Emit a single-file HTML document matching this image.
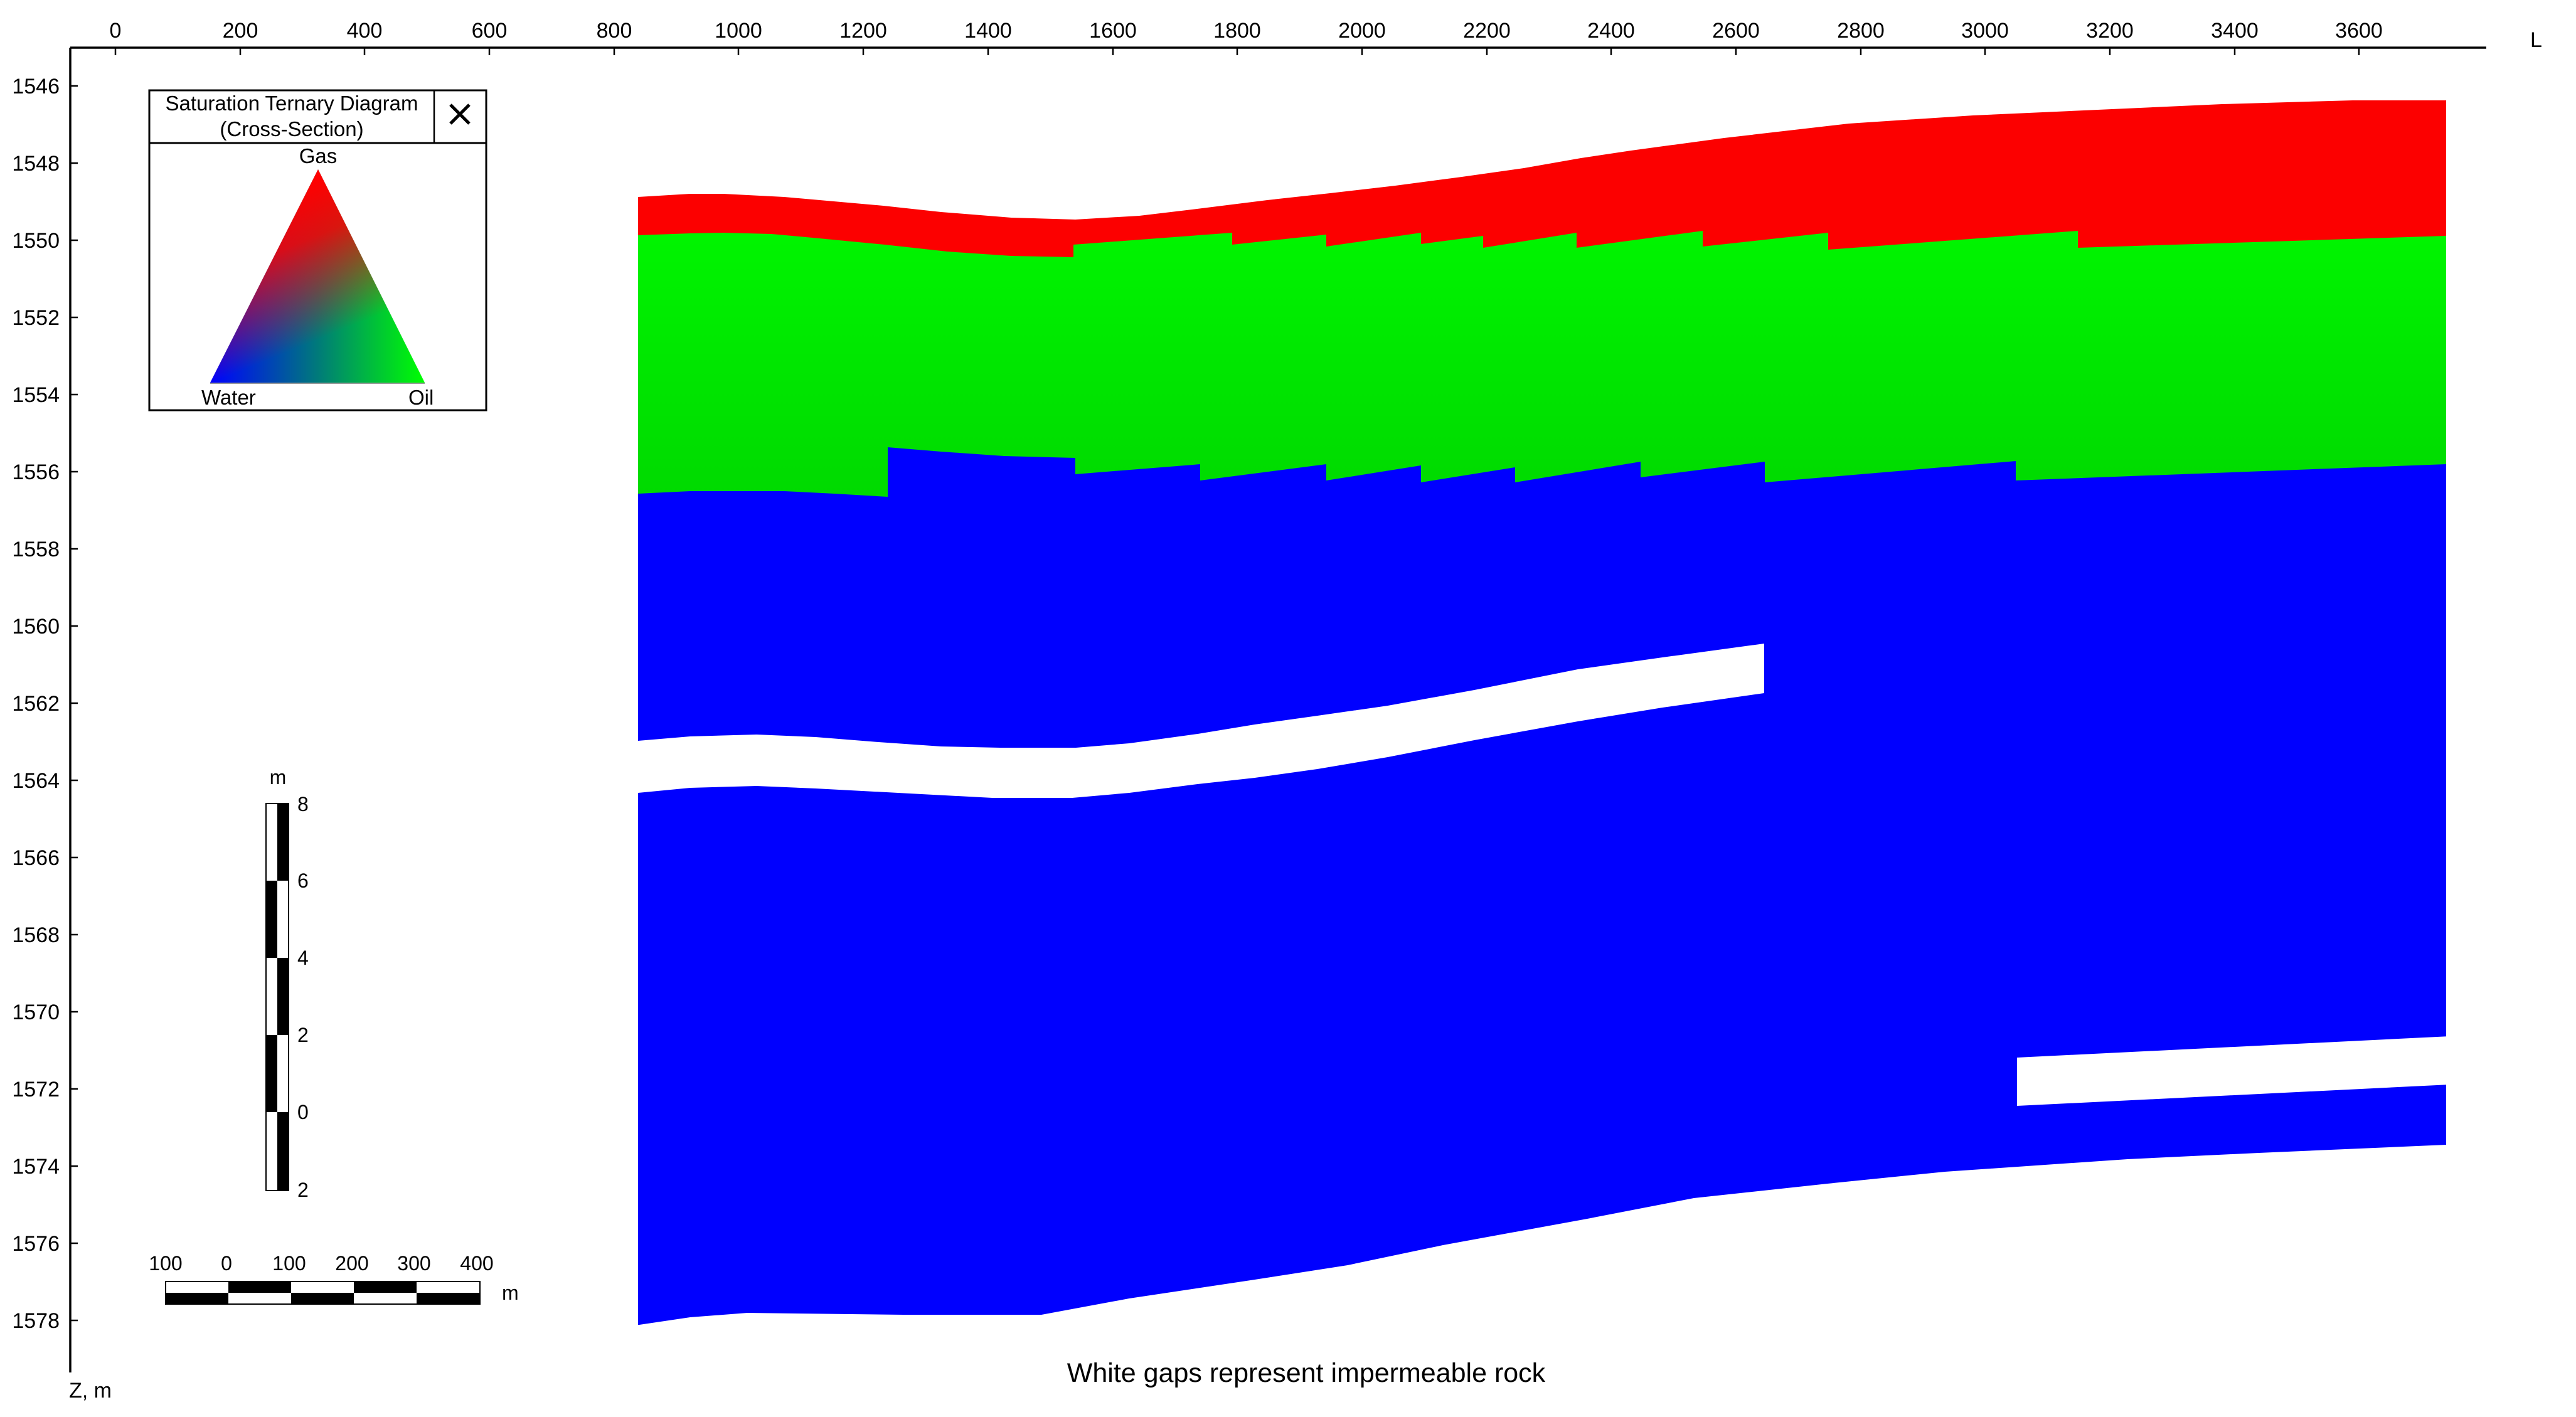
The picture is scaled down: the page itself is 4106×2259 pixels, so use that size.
<!DOCTYPE html>
<html><head><meta charset="utf-8"><style>
html,body{margin:0;padding:0;background:#fff;}
svg{display:block;}
text{font-family:"Liberation Sans",Arial,sans-serif;fill:#000;}
</style></head><body>
<svg width="4106" height="2259" viewBox="0 0 4106 2259" xmlns="http://www.w3.org/2000/svg">
<defs>
<linearGradient id="gr" gradientUnits="userSpaceOnUse" x1="0" y1="380" x2="0" y2="790">
<stop offset="0" stop-color="#00f400"/><stop offset="0.5" stop-color="#00e600"/><stop offset="1" stop-color="#00da00"/></linearGradient>
<linearGradient id="tb" gradientUnits="userSpaceOnUse" x1="335" y1="0" x2="677" y2="0">
<stop offset="0" stop-color="#0000ff"/><stop offset="0.5" stop-color="#007a7a"/><stop offset="1" stop-color="#00ff00"/></linearGradient>
<linearGradient id="tr" gradientUnits="userSpaceOnUse" x1="470" y1="300" x2="560" y2="520">
<stop offset="0" stop-color="#ff0000" stop-opacity="1"/><stop offset="0.35" stop-color="#ff0000" stop-opacity="0.85"/><stop offset="1" stop-color="#ff0000" stop-opacity="0"/></linearGradient>
</defs>

<polygon fill="#fc0000" points="1017,314 1100,309 1153,309 1250,314 1408,328 1500,338 1612,347 1714,350 1816,344 1900,334 2020,319 2120,308 2224,296 2330,282 2429,268 2520,252 2600,240 2748,220 2947,197 3145,184 3344,175 3542,166 3750,160 3899,160 3899,700 1017,700"/>
<polygon fill="url(#gr)" points="1017,375 1100,372 1153,371 1230,373 1306,380 1410,390 1510,401 1612,408 1711,410 1711,390 1964,371 1964,390 2114,374 2114,393 2265,371 2265,389 2364,376 2364,395 2513,371 2513,395 2714,368 2714,393 2914,371 2914,398 3312,368 3312,395 3899,376 3899,800 1017,800"/>
<polygon fill="#0000ff" points="1017,787 1100,783 1250,783 1330,787 1415,792 1415,713 1500,720 1600,727 1714,730 1714,756 1913,740 1913,766 2114,740 2114,766 2265,742 2265,769 2415,745 2415,769 2615,736 2615,761 2813,736 2813,769 3213,735 3213,766 3899,740 3899,1825 3600,1838 3391,1848 3100,1868 2913,1887 2700,1910 2530,1943 2300,1985 2148,2017 2000,2040 1800,2070 1660,2096 1440,2096 1191,2093 1100,2100 1019,2112 1017,2112"/>
<polygon fill="#fff" points="1017,1181 1100,1174 1206,1171 1300,1175 1400,1183 1500,1190 1594,1192 1715,1192 1800,1185 1909,1170 2000,1155 2100,1141 2212,1125 2350,1100 2515,1067 2650,1048 2812,1026 2812,1105 2650,1128 2515,1150 2350,1180 2212,1207 2100,1226 2000,1240 1909,1250 1800,1264 1709,1272 1582,1272 1450,1265 1300,1257 1206,1253 1100,1256 1017,1264"/>
<polygon fill="#fff" points="3215,1686 3905,1652 3905,1729 3215,1763"/>

<line x1="112" y1="76" x2="3963" y2="76" stroke="#000" stroke-width="3.5"/>
<line x1="112" y1="76" x2="112" y2="2188" stroke="#000" stroke-width="3.5"/>
<g stroke="#000" stroke-width="2.5">
<line x1="184" y1="76" x2="184" y2="88"/><line x1="383" y1="76" x2="383" y2="88"/><line x1="581" y1="76" x2="581" y2="88"/><line x1="780" y1="76" x2="780" y2="88"/><line x1="979" y1="76" x2="979" y2="88"/><line x1="1177" y1="76" x2="1177" y2="88"/><line x1="1376" y1="76" x2="1376" y2="88"/><line x1="1575" y1="76" x2="1575" y2="88"/><line x1="1774" y1="76" x2="1774" y2="88"/><line x1="1972" y1="76" x2="1972" y2="88"/><line x1="2171" y1="76" x2="2171" y2="88"/><line x1="2370" y1="76" x2="2370" y2="88"/><line x1="2568" y1="76" x2="2568" y2="88"/><line x1="2767" y1="76" x2="2767" y2="88"/><line x1="2966" y1="76" x2="2966" y2="88"/><line x1="3164" y1="76" x2="3164" y2="88"/><line x1="3363" y1="76" x2="3363" y2="88"/><line x1="3562" y1="76" x2="3562" y2="88"/><line x1="3760" y1="76" x2="3760" y2="88"/>
<line x1="112" y1="137" x2="124" y2="137"/><line x1="112" y1="260" x2="124" y2="260"/><line x1="112" y1="383" x2="124" y2="383"/><line x1="112" y1="506" x2="124" y2="506"/><line x1="112" y1="629" x2="124" y2="629"/><line x1="112" y1="752" x2="124" y2="752"/><line x1="112" y1="875" x2="124" y2="875"/><line x1="112" y1="998" x2="124" y2="998"/><line x1="112" y1="1121" x2="124" y2="1121"/><line x1="112" y1="1244" x2="124" y2="1244"/><line x1="112" y1="1367" x2="124" y2="1367"/><line x1="112" y1="1490" x2="124" y2="1490"/><line x1="112" y1="1613" x2="124" y2="1613"/><line x1="112" y1="1736" x2="124" y2="1736"/><line x1="112" y1="1859" x2="124" y2="1859"/><line x1="112" y1="1982" x2="124" y2="1982"/><line x1="112" y1="2105" x2="124" y2="2105"/>
</g>
<g font-size="34" text-anchor="middle">
<text x="184" y="60">0</text><text x="383" y="60">200</text><text x="581" y="60">400</text><text x="780" y="60">600</text><text x="979" y="60">800</text><text x="1177" y="60">1000</text><text x="1376" y="60">1200</text><text x="1575" y="60">1400</text><text x="1774" y="60">1600</text><text x="1972" y="60">1800</text><text x="2171" y="60">2000</text><text x="2370" y="60">2200</text><text x="2568" y="60">2400</text><text x="2767" y="60">2600</text><text x="2966" y="60">2800</text><text x="3164" y="60">3000</text><text x="3363" y="60">3200</text><text x="3562" y="60">3400</text><text x="3760" y="60">3600</text>
</g>
<text x="4033" y="75" font-size="34">L</text>
<g font-size="34" text-anchor="end">
<text x="95" y="149">1546</text><text x="95" y="272">1548</text><text x="95" y="395">1550</text><text x="95" y="518">1552</text><text x="95" y="641">1554</text><text x="95" y="764">1556</text><text x="95" y="887">1558</text><text x="95" y="1010">1560</text><text x="95" y="1133">1562</text><text x="95" y="1256">1564</text><text x="95" y="1379">1566</text><text x="95" y="1502">1568</text><text x="95" y="1625">1570</text><text x="95" y="1748">1572</text><text x="95" y="1871">1574</text><text x="95" y="1994">1576</text><text x="95" y="2117">1578</text>
</g>
<text x="110" y="2228" font-size="34">Z, m</text>

<rect x="238" y="144" width="537" height="510" fill="#fff" stroke="#000" stroke-width="3"/>
<line x1="238" y1="228" x2="775" y2="228" stroke="#000" stroke-width="3"/>
<line x1="692" y1="144" x2="692" y2="228" stroke="#000" stroke-width="2.5"/>
<text x="465" y="176" font-size="33" text-anchor="middle">Saturation Ternary Diagram</text>
<text x="465" y="217" font-size="33" text-anchor="middle">(Cross-Section)</text>
<path d="M718,167 L748,197 M748,167 L718,197" stroke="#000" stroke-width="5"/>
<text x="507" y="260" font-size="33" text-anchor="middle">Gas</text>
<polygon points="507,270 335,610 677,610" fill="url(#tb)"/>
<polygon points="507,270 335,610 677,610" fill="url(#tr)"/>
<line x1="335" y1="611" x2="677" y2="611" stroke="#999" stroke-width="2"/>
<text x="321" y="645" font-size="33">Water</text>
<text x="651" y="645" font-size="33">Oil</text>

<text x="443" y="1250" font-size="32" text-anchor="middle">m</text>
<rect x="424" y="1281" width="36" height="617" fill="#fff" stroke="#000" stroke-width="2"/>
<rect x="442" y="1281" width="18" height="123" fill="#000"/>
<rect x="424" y="1404" width="18" height="123" fill="#000"/>
<rect x="442" y="1527" width="18" height="123" fill="#000"/>
<rect x="424" y="1650" width="18" height="123" fill="#000"/>
<rect x="442" y="1773" width="18" height="125" fill="#000"/>
<g font-size="32">
<text x="474" y="1293">8</text><text x="474" y="1415">6</text><text x="474" y="1538">4</text><text x="474" y="1661">2</text><text x="474" y="1784">0</text><text x="474" y="1908">2</text>
</g>

<rect x="264" y="2043" width="501" height="36" fill="#fff" stroke="#000" stroke-width="2"/>
<rect x="364" y="2043" width="100" height="18" fill="#000"/>
<rect x="564" y="2043" width="100" height="18" fill="#000"/>
<rect x="264" y="2061" width="100" height="18" fill="#000"/>
<rect x="464" y="2061" width="100" height="18" fill="#000"/>
<rect x="664" y="2061" width="101" height="18" fill="#000"/>
<g font-size="32" text-anchor="middle">
<text x="264" y="2025">100</text><text x="361" y="2025">0</text><text x="461" y="2025">100</text><text x="561" y="2025">200</text><text x="660" y="2025">300</text><text x="760" y="2025">400</text>
</g>
<text x="800" y="2072" font-size="32">m</text>

<text x="2082" y="2203" font-size="43" text-anchor="middle">White gaps represent impermeable rock</text>
</svg>
</body></html>
